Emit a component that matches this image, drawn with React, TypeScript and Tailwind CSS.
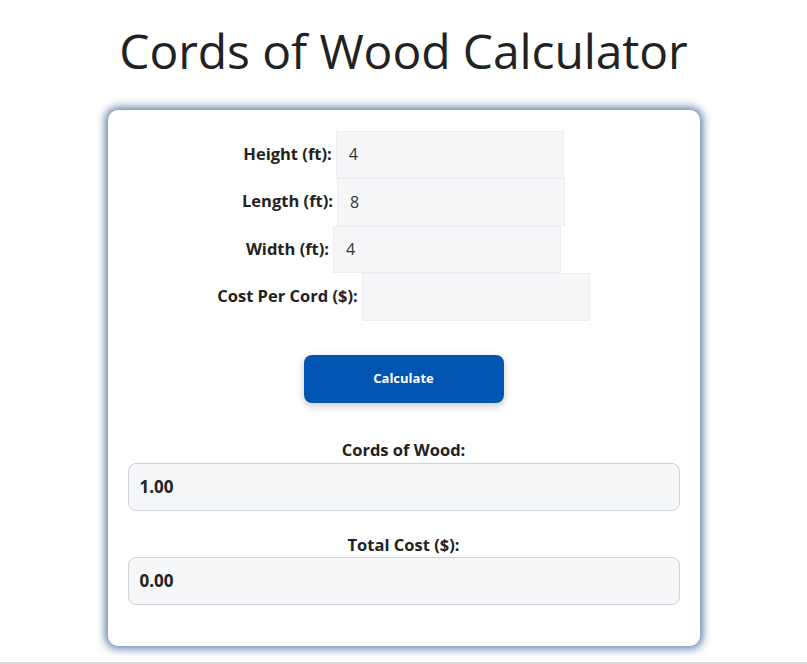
import React, { useState } from 'react';

const FONT = { fontFamily: '"Open Sans", "Noto Sans", Arial, sans-serif' };

const FIELDS = [
  { id: 'height', label: 'Height (ft):', value: '4' },
  { id: 'length', label: 'Length (ft):', value: '8' },
  { id: 'width', label: 'Width (ft):', value: '4' },
  { id: 'cost', label: 'Cost Per Cord ($):', value: '' },
];

export default function App() {
  const [values, setValues] = useState<Record<string, string>>(
    Object.fromEntries(FIELDS.map(f => [f.id, f.value]))
  );
  const [cords, setCords] = useState('1.00');
  const [total, setTotal] = useState('0.00');

  const calculate = () => {
    const h = parseFloat(values.height) || 0;
    const l = parseFloat(values.length) || 0;
    const w = parseFloat(values.width) || 0;
    const c = parseFloat(values.cost) || 0;
    const n = (h * l * w) / 128;
    setCords(n.toFixed(2));
    setTotal((n * c).toFixed(2));
  };

  return (
    <div className="min-h-[664px] bg-white text-[#222]" style={FONT}>
      <h1 className="pt-[22px] text-center text-[48px] leading-[1.2] font-normal tracking-[-0.1px] text-[#222]">
        Cords of Wood Calculator
      </h1>

      <div className="mx-auto mt-[30px] w-[592px] rounded-[10px] bg-white px-5 pt-[21px] pb-[41px] shadow-[0_0_8px_3px_rgba(85,120,165,0.9)]">
        <div className="flex flex-col">
          {FIELDS.map(f => (
            <div key={f.id} className="flex h-[47.5px] items-stretch justify-center">
              <label className="flex items-center pr-[4px] text-[16.5px] font-bold text-[#222]">{f.label}</label>
              <input
                type="text"
                value={values[f.id]}
                onChange={e => setValues({ ...values, [f.id]: e.target.value })}
                className="w-[228px] border border-[#eceef1] bg-[#f6f7f8] px-3 text-[16px] text-[#333] outline-none"
              />
            </div>
          ))}
        </div>

        <div className="mt-[34px] flex justify-center">
          <button
            onClick={calculate}
            className="h-[48px] w-[200px] rounded-[8px] bg-[#0055b3] text-[13px] font-bold text-white shadow-[0_3px_8px_rgba(0,0,0,0.22)]"
          >
            Calculate
          </button>
        </div>

        <div className="mt-[35px] text-center text-[16.5px] font-bold leading-[24px] text-[#222]">Cords of Wood:</div>
        <div className="mt-[1px] flex h-[48px] items-center rounded-[8px] border border-[#cfd2d6] bg-[#f6f7f8] px-[11px] text-[17px] font-bold text-[#222]">
          {cords}
        </div>

        <div className="mt-[22px] text-center text-[16.5px] font-bold leading-[24px] text-[#222]">Total Cost ($):</div>
        <div className="flex h-[48px] items-center rounded-[8px] border border-[#cfd2d6] bg-[#f6f7f8] px-[11px] text-[17px] font-bold text-[#222]">
          {total}
        </div>
      </div>

      <div className="mt-[16px] h-[2px] bg-[#d9d9d9]" />
    </div>
  );
}
